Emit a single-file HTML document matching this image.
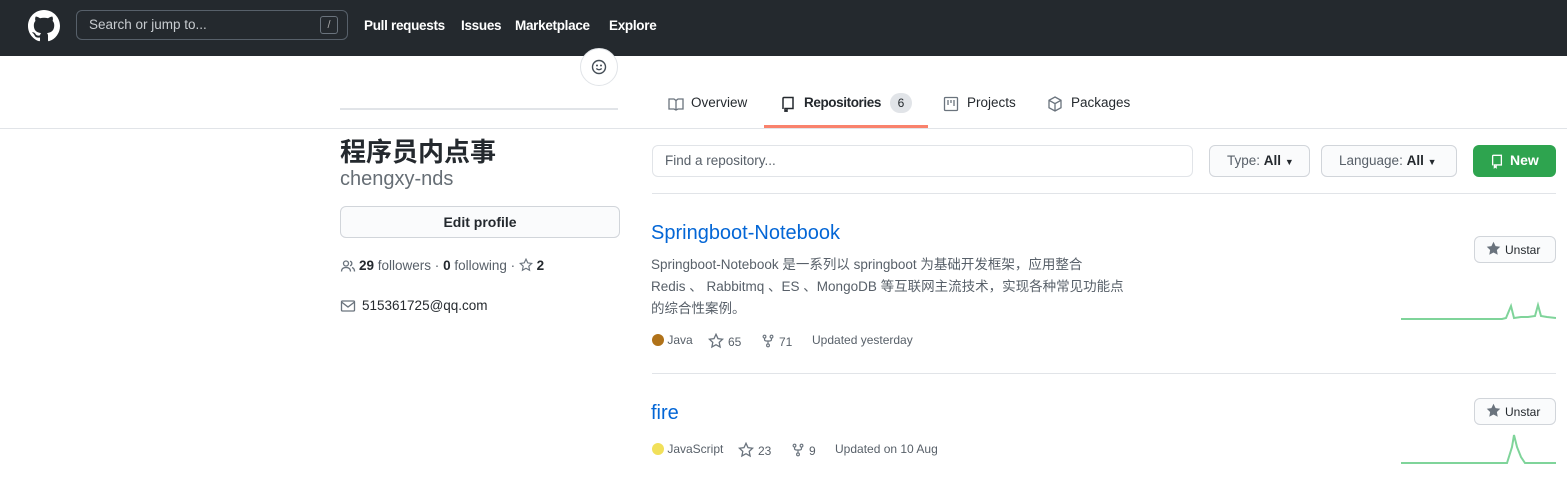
<!DOCTYPE html>
<html><head><meta charset="utf-8"><style>
*{margin:0;padding:0;box-sizing:border-box}
body{width:1567px;height:489px;overflow:hidden;background:#fff;font-family:"Liberation Sans","Noto Sans CJK SC",sans-serif;color:#24292e;position:relative;font-size:14px}
.a{position:absolute}
.hdr{left:0;top:0;width:1567px;height:56px;background:#24292e}
.nav{color:#fff;font-weight:bold;font-size:13.5px;top:18px;letter-spacing:-0.3px}
.btn{border:1px solid #d1d5da;border-radius:6px;background:#fafbfc;font-size:14px}
.svg{fill:none;stroke:#6a737d;stroke-width:1.3}
.tab{top:95px;font-size:13.5px;color:#24292e}
.meta{font-size:12px;color:#586069;top:333px;white-space:nowrap}
.ic{vertical-align:-3px;margin-right:4px}
</style></head><body>
<div class="a hdr"></div>
<svg class="a" style="left:28px;top:10px" width="32" height="32" viewBox="0 0 16 16"><path fill="#fff" d="M8 0C3.58 0 0 3.58 0 8c0 3.54 2.29 6.53 5.470 7.59.4.07.55-.17.55-.38 0-.19-.01-.82-.01-1.49-2.01.37-2.53-.49-2.69-.94-.09-.23-.48-.94-.82-1.130-.28-.15-.68-.52-.01-.53.63-.01 1.08.58 1.23.82.72 1.21 1.87.87 2.33.66.07-.52.28-.87.51-1.07-1.78-.2-3.64-.89-3.640-3.95 0-.87.31-1.59.82-2.15-.08-.2-.36-1.02.08-2.12 0 0 .67-.21 2.2.82.64-.18 1.32-.27 2-.27.68 0 1.36.09 2 .27 1.53-1.04 2.2-.82 2.2-.82.44 1.1.16 1.92.08 2.12.51.56.82 1.27.82 2.15 0 3.07-1.87 3.75-3.65 3.95.29.25.54.73.54 1.48 0 1.07-.01 1.93-.01 2.2 0 .21.15.46.55.38A8.013 8.013 0 0016 8c0-4.42-3.58-8-8-8z"/></svg>
<div class="a" style="left:76px;top:10px;width:272px;height:30px;border:1px solid #57606a;border-radius:6px;color:#c8ccd0;font-size:13.5px;padding:6px 12px">Search or jump to...</div>
<div class="a" style="left:320px;top:16px;width:18px;height:18px;border:1px solid #6a737d;border-radius:3px;color:#aaa;font-size:11px;text-align:center;line-height:16px">/</div>
<div class="a nav" style="left:364px">Pull requests</div>
<div class="a nav" style="left:461px">Issues</div>
<div class="a nav" style="left:515px">Marketplace</div>
<div class="a nav" style="left:609px">Explore</div>
<div class="a" style="left:580px;top:48px;width:38px;height:38px;border-radius:50%;background:#fff;border:1px solid #e1e4e8"></div>
<svg class="a" style="left:591px;top:59px" width="16" height="16" viewBox="0 0 16 16"><circle cx="8" cy="8" r="6.5" fill="none" stroke="#444d56" stroke-width="1.4"/><circle cx="6" cy="6.5" r="1" fill="#444d56"/><circle cx="10" cy="6.5" r="1" fill="#444d56"/><path d="M5.3 9.5q2.7 2.5 5.4 0" fill="none" stroke="#444d56" stroke-width="1.3"/></svg>
<div class="a" style="left:340px;top:108px;width:278px;height:2px;background:#e1e4e8"></div>
<div class="a" style="left:0;top:128px;width:1567px;height:1px;background:#e1e4e8"></div>
<svg class="a svg" style="left:668px;top:96px" width="16" height="16" viewBox="0 0 16 16"><path d="M1 3h5l2 1.5L10 3h5v10h-5l-2 1-2-1H1zM8 4.5V14"/></svg>
<div class="a tab" style="left:691px">Overview</div>
<svg class="a" style="left:780px;top:96px" width="16" height="16" viewBox="0 0 16 16"><path d="M3 13V2.5Q3 1.5 4 1.5h9v11H4.2M5 12.5v3l1-.8 1 .8v-3" fill="none" stroke="#24292e" stroke-width="1.5"/></svg>
<div class="a tab" style="left:804px;font-weight:bold;letter-spacing:-0.4px">Repositories</div>
<div class="a" style="left:890px;top:93px;width:22px;height:20px;border-radius:10px;background:#e1e4e8;font-size:12px;text-align:center;line-height:20px">6</div>
<div class="a" style="left:764px;top:125px;width:164px;height:3px;background:#f9826c"></div>
<svg class="a svg" style="left:943px;top:96px" width="16" height="16" viewBox="0 0 16 16"><rect x="1.5" y="1.5" width="13" height="13" rx="1"/><path d="M5 4v5M8 4v3M11 4v6"/></svg>
<div class="a tab" style="left:967px">Projects</div>
<svg class="a svg" style="left:1047px;top:96px" width="16" height="16" viewBox="0 0 16 16"><path d="M8 1l6 3.3v7.4L8 15l-6-3.3V4.3zM2 4.3L8 7.6l6-3.3M8 7.6V15"/></svg>
<div class="a tab" style="left:1071px">Packages</div>
<div class="a" style="left:340px;top:136px;font-size:26px;font-weight:bold;line-height:32px">程序员内点事</div>
<div class="a" style="left:340px;top:168px;font-size:20px;color:#666e75;font-weight:300">chengxy-nds</div>
<div class="a btn" style="left:340px;top:206px;width:280px;height:32px;text-align:center;line-height:30px;font-weight:bold">Edit profile</div>
<svg class="a svg" style="left:340px;top:258px" width="16" height="16" viewBox="0 0 16 16"><circle cx="6" cy="5.5" r="2.5"/><path d="M1.5 13.5q0-4 4.5-4t4.5 4M10 3.2a2.3 2.3 0 010 4.5M12 9.5q2.5.8 2.5 4"/></svg>
<div class="a" style="left:359px;top:258px;color:#586069;font-size:13.5px"><b style="color:#24292e">29</b> followers · <b style="color:#24292e">0</b> following · <svg class="svg" width="14" height="14" viewBox="0 0 16 16" style="vertical-align:-2px"><path d="M8 1.3l2 4.3 4.6.6-3.4 3.2.9 4.6L8 11.7 3.9 14l.9-4.6L1.4 6.2 6 5.6z"/></svg> <b style="color:#24292e">2</b></div>
<svg class="a svg" style="left:340px;top:298px" width="16" height="16" viewBox="0 0 16 16"><rect x="1.5" y="3" width="13" height="10" rx="1"/><path d="M1.5 4l6.5 5 6.5-5"/></svg>
<div class="a" style="left:362px;top:298px;font-size:13.5px">515361725@qq.com</div>
<div class="a" style="left:652px;top:145px;width:541px;height:32px;border:1px solid #e1e4e8;border-radius:6px;padding:7px 12px;color:#586069;font-size:13.5px">Find a repository...</div>
<div class="a btn" style="left:1209px;top:145px;width:101px;height:32px;padding:7px 0 0 17px;color:#586069;font-size:13.5px">Type: <b style="color:#24292e">All</b> <span style="font-size:9px;color:#24292e">▼</span></div>
<div class="a btn" style="left:1321px;top:145px;width:136px;height:32px;padding:7px 0 0 17px;color:#586069;font-size:13.5px">Language: <b style="color:#24292e">All</b> <span style="font-size:9px;color:#24292e">▼</span></div>
<div class="a" style="left:1473px;top:145px;width:83px;height:32px;background:#2ea44f;border-radius:6px;color:#fff;font-weight:bold;padding:7px 0 0 37px">New</div>
<svg class="a" style="left:1490px;top:153px" width="14" height="16" viewBox="0 0 16 16"><path d="M3 13V2.5Q3 1.5 4 1.5h9v11H4.2M5 12.5v3l1-.8 1 .8v-3" fill="none" stroke="#fff" stroke-width="1.5"/></svg>
<div class="a" style="left:652px;top:193px;width:904px;height:1px;background:#e1e4e8"></div>
<div class="a" style="left:651px;top:222px;font-size:20px;color:#0366d6">Springboot-Notebook</div>
<div class="a" style="left:651px;top:254px;color:#586069;line-height:22px;font-size:13.5px;width:520px">Springboot-Notebook 是一系列以 springboot 为基础开发框架，应用整合<br>Redis 、 Rabbitmq 、ES 、MongoDB 等互联网主流技术，实现各种常见功能点<br>的综合性案例。</div>
<div class="a meta" style="left:652px"><span style="display:inline-block;width:12px;height:12px;border-radius:50%;background:#b07219;vertical-align:-2px"></span> Java</div>
<div class="a meta" style="left:708px"><svg class="svg ic" width="16" height="16" viewBox="0 0 16 16"><path d="M8 1.3l2 4.3 4.6.6-3.4 3.2.9 4.6L8 11.7 3.9 14l.9-4.6L1.4 6.2 6 5.6z"/></svg>65</div>
<div class="a meta" style="left:761px"><svg class="svg ic" width="14" height="16" viewBox="0 0 16 16"><circle cx="4" cy="3" r="1.6"/><circle cx="12" cy="3" r="1.6"/><circle cx="8" cy="13" r="1.6"/><path d="M4 4.6v1.4q0 2 2 2h4q2 0 2-2V4.6M8 8v3.4"/></svg>71</div>
<div class="a meta" style="left:812px">Updated yesterday</div>
<div class="a btn" style="left:1474px;top:236px;width:82px;height:27px;font-size:12px;padding:6px 0 0 30px">Unstar</div>
<svg class="a" style="left:1486px;top:241px" width="15" height="15" viewBox="0 0 16 16"><path fill="#6a737d" d="M8 .8l2.2 4.6 5 .7-3.6 3.5.9 5L8 12.2 3.5 14.6l.9-5L.8 6.1l5-.7z"/></svg>
<svg class="a" style="left:1401px;top:300px" width="155" height="25"><polyline points="0,19 101,19 105,18 110,6 113,18 120,17 127,17 134,16 137,5 140,16 146,17 155,18" fill="none" stroke="#7fd49a" stroke-width="2"/></svg>
<div class="a" style="left:652px;top:373px;width:904px;height:1px;background:#e1e4e8"></div>
<div class="a" style="left:651px;top:402px;font-size:20px;color:#0366d6">fire</div>
<div class="a meta" style="left:652px;top:442px"><span style="display:inline-block;width:12px;height:12px;border-radius:50%;background:#f1e05a;vertical-align:-2px"></span> JavaScript</div>
<div class="a meta" style="left:738px;top:442px"><svg class="svg ic" width="16" height="16" viewBox="0 0 16 16"><path d="M8 1.3l2 4.3 4.6.6-3.4 3.2.9 4.6L8 11.7 3.9 14l.9-4.6L1.4 6.2 6 5.6z"/></svg>23</div>
<div class="a meta" style="left:791px;top:442px"><svg class="svg ic" width="14" height="16" viewBox="0 0 16 16"><circle cx="4" cy="3" r="1.6"/><circle cx="12" cy="3" r="1.6"/><circle cx="8" cy="13" r="1.6"/><path d="M4 4.6v1.4q0 2 2 2h4q2 0 2-2V4.6M8 8v3.4"/></svg>9</div>
<div class="a meta" style="left:835px;top:442px">Updated on 10 Aug</div>
<div class="a btn" style="left:1474px;top:398px;width:82px;height:27px;font-size:12px;padding:6px 0 0 30px">Unstar</div>
<svg class="a" style="left:1486px;top:403px" width="15" height="15" viewBox="0 0 16 16"><path fill="#6a737d" d="M8 .8l2.2 4.6 5 .7-3.6 3.5.9 5L8 12.2 3.5 14.6l.9-5L.8 6.1l5-.7z"/></svg>
<svg class="a" style="left:1401px;top:430px" width="155" height="36"><polyline points="0,33 106,33 111,17 113,5 116,17 120,27 124,33 155,33" fill="none" stroke="#7fd49a" stroke-width="2"/></svg>
</body></html>
